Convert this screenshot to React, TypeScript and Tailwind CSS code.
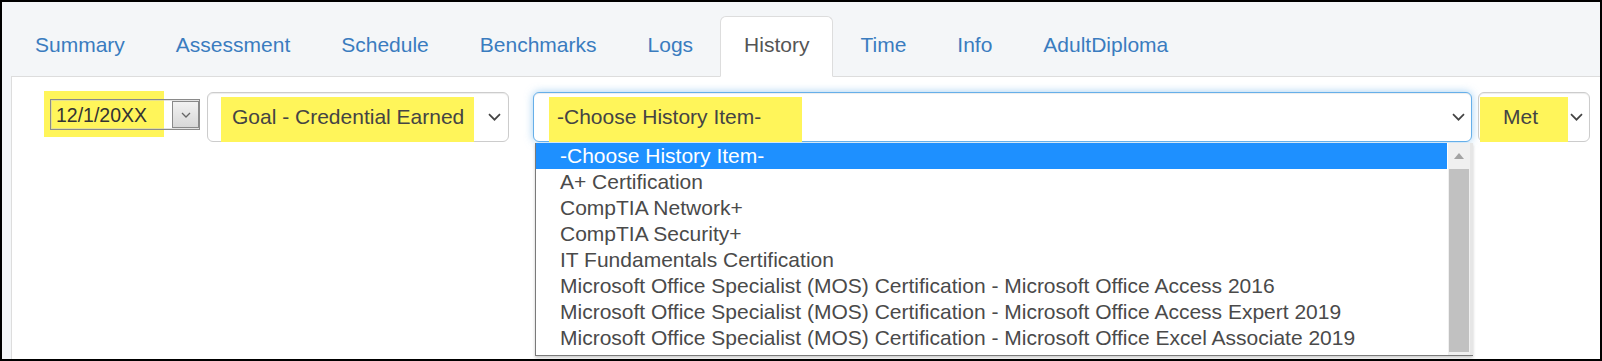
import React from "react";

const tabs = ["Summary", "Assessment", "Schedule", "Benchmarks", "Logs", "History", "Time", "Info", "AdultDiploma"];

const items = [
  "-Choose History Item-",
  "A+ Certification",
  "CompTIA Network+",
  "CompTIA Security+",
  "IT Fundamentals Certification",
  "Microsoft Office Specialist (MOS) Certification - Microsoft Office Access 2016",
  "Microsoft Office Specialist (MOS) Certification - Microsoft Office Access Expert 2019",
  "Microsoft Office Specialist (MOS) Certification - Microsoft Office Excel Associate 2019",
];

function Chevron({ className }: { className?: string }) {
  return (
    <svg viewBox="0 0 13 8" className={className} fill="none">
      <path d="M1 1.2l5.5 5.5 5.5-5.5" stroke="#444444" strokeWidth="1.7" />
    </svg>
  );
}

export default function App() {
  return (
    <div className="w-[1602px] h-[361px] border-2 border-black bg-[#f4f6f8] flex flex-col overflow-hidden font-['Liberation_Sans',Arial,sans-serif]">
      <nav className="h-[74px] shrink-0 flex items-end pl-[9px] relative z-10">
        {tabs.map((t) => (
          <div
            key={t}
            className={
              t === "History"
                ? "-mb-px mr-[3px] border rounded-t-[6px] px-[23px] pt-[13px] pb-[16px] text-[21px] leading-[30px] bg-white border-[#dddddd] border-b-transparent text-[#555555]"
                : "-mb-px mr-[3px] border rounded-t-[6px] px-[23px] pt-[13px] pb-[16px] text-[21px] leading-[30px] border-transparent text-[#3a7cbf]"
            }
          >
            {t}
          </div>
        ))}
      </nav>
      <div className="flex-1 ml-[9px] border-l border-t border-[#dddddd] bg-white">
        <div className="flex items-start pl-[38px] pt-[15px]">
          {/* Date select */}
          <div className="relative mt-[7px] w-[150px] h-[31px]">
            <span className="absolute left-[-6px] top-[-8px] w-[120px] h-[46px] bg-[#fff55a]" />
            <div className="relative w-full h-full border border-[#8a8a8a] flex items-center justify-between shadow-[inset_0_0_0_1px_rgba(200,200,200,0.5)]">
              <span className="pl-[5px] text-[19.5px] leading-[22px] text-[#333333]">12/1/20XX</span>
              <span className="w-[27px] h-[27px] border border-[#8a8a8a] bg-gradient-to-b from-[#f2f2f2] to-[#d8d8d8] flex items-center justify-center">
                <svg viewBox="0 0 10 6" className="w-[10px] h-[6px]" fill="none">
                  <path d="M1 1l4 4 4-4" stroke="#666666" strokeWidth="1.3" />
                </svg>
              </span>
            </div>
          </div>

          {/* Goal select */}
          <div className="relative ml-[7px] w-[302px] h-[50px] rounded-[6px] border border-[#cccccc] bg-white flex items-center shadow-[inset_0_1px_1px_rgba(0,0,0,0.075)]">
            <span className="absolute left-[13px] top-[4px] bottom-[-1px] w-[253px] bg-[#fff55a]" />
            <span className="relative pl-[24px] text-[21px] leading-[24px] text-[#444444]">Goal - Credential Earned</span>
            <Chevron className="relative ml-auto mr-[7px] w-[13px] h-[8px]" />
          </div>

          {/* History select (focused, open) */}
          <div className="relative ml-[24px] w-[939px] h-[50px] rounded-[6px] border border-[#66afe9] bg-white flex items-center shadow-[inset_0_1px_1px_rgba(0,0,0,0.075),0_0_8px_rgba(102,175,233,0.6)]">
            <span className="absolute left-[15px] top-[4px] bottom-[-1px] w-[253px] bg-[#fff55a]" />
            <span className="relative pl-[23px] text-[21px] leading-[24px] text-[#444444]">-Choose History Item-</span>
            <Chevron className="relative ml-auto mr-[6px] w-[13px] h-[8px]" />

            <div className="absolute left-[1px] top-[50px] z-20 w-[938px] h-[213px] border-l border-b border-[#7a7a7a] bg-white flex shadow-[0_2px_3px_rgba(0,0,0,0.2)]">
              <div className="w-[911px] h-[212px] overflow-hidden">
                {items.map((it, i) => (
                  <div
                    key={it}
                    className={
                      i === 0
                        ? "h-[26px] pl-[24px] text-[21px] leading-[26px] whitespace-nowrap bg-[#1e90ff] text-white"
                        : "h-[26px] pl-[24px] text-[21px] leading-[26px] whitespace-nowrap text-[#4a4a4a]"
                    }
                  >
                    {it}
                  </div>
                ))}
              </div>
              <div className="w-[1px] bg-white" />
              <div className="w-[22px] h-[212px] flex flex-col bg-[#f0f0f0]">
                <div className="h-[26px] flex items-center justify-center">
                  <svg viewBox="0 0 10 6" className="w-[10px] h-[6px]">
                    <polygon points="0,6 5,0 10,6" fill="#a3a3a3" />
                  </svg>
                </div>
                <div className="h-[183px] mx-[1px] bg-[#c1c1c1]" />
              </div>
              <div className="w-[3px] h-[212px] bg-[#e6e6e6]" />
            </div>
          </div>

          {/* Met select */}
          <div className="relative ml-[6px] w-[112px] h-[50px] rounded-[6px] border border-[#cccccc] bg-white flex items-center shadow-[inset_0_1px_1px_rgba(0,0,0,0.075)]">
            <span className="absolute left-[1px] top-[4px] bottom-[-1px] w-[88px] bg-[#fff55a]" />
            <span className="relative pl-[24px] text-[21px] leading-[24px] text-[#444444]">Met</span>
            <Chevron className="relative ml-auto mr-[6px] w-[13px] h-[8px]" />
          </div>
        </div>
      </div>
    </div>
  );
}
